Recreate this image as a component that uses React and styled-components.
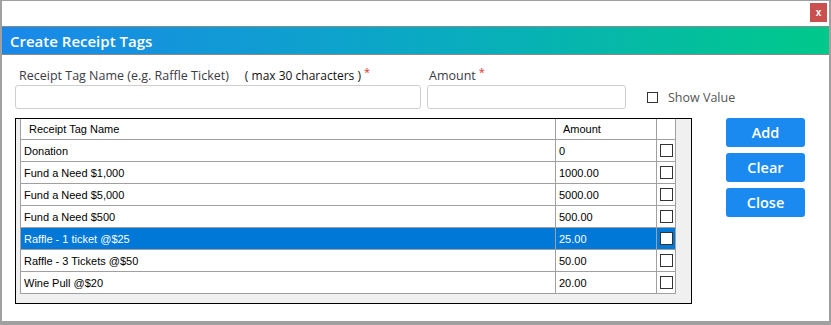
import React, { useState } from "react";
import styled, { createGlobalStyle } from "styled-components";

const GlobalStyle = createGlobalStyle`
  html, body {
    margin: 0;
    padding: 0;
    background: #ffffff;
  }
  * {
    box-sizing: border-box;
  }
`;

const Window = styled.div`
  width: 831px;
  height: 325px;
  border: 2px solid #a0a0a0;
  border-top-width: 1px;
  border-bottom-width: 4px;
  background: #ffffff;
  display: flex;
  flex-direction: column;
  font-family: "Open Sans", "Liberation Sans", sans-serif;
`;

const TopStrip = styled.div`
  height: 25px;
  display: flex;
  justify-content: flex-end;
  align-items: flex-start;
  padding: 2px 2px 0 0;
`;

const CloseBox = styled.button`
  width: 17px;
  height: 19px;
  border: none;
  padding: 0;
  background: #c9504f;
  color: #ffffff;
  font-family: "Liberation Sans", sans-serif;
  font-size: 10px;
  font-weight: bold;
  line-height: 19px;
  cursor: pointer;
`;

const TitleBar = styled.div`
  height: 29px;
  border-top: 1px solid #8a8a8a;
  border-bottom: 1px solid #8a8a8a;
  background: linear-gradient(to right, #1a88ea 0%, #0aa9c4 50%, #00c98a 100%);
  color: #ffffff;
  font-size: 15px;
  font-weight: 600;
  display: flex;
  align-items: center;
  padding-left: 8px;
`;

const Body = styled.div`
  flex: 1;
  padding: 12px 0 0 13px;
  display: flex;
  flex-direction: column;
`;

const FormRow = styled.div`
  display: flex;
  align-items: flex-start;
  gap: 6px;
`;

const Field = styled.div`
  width: ${(p) => p.$width}px;
  display: flex;
  flex-direction: column;
`;

const Label = styled.div`
  height: 18px;
  padding-left: ${(p) => p.$indent || 0}px;
  font-size: 12.5px;
  color: #3c3c46;
  white-space: nowrap;
`;

const Hint = styled.span`
  margin-left: 16px;
  font-size: 12px;
  color: #111111;
`;

const Required = styled.sup`
  color: #e0312c;
  font-size: 11px;
  margin-left: 3px;
  vertical-align: 4px;
  line-height: 0;
`;

const TextBox = styled.input`
  height: 24px;
  width: 100%;
  border: 1px solid #cfcfcf;
  border-radius: 3px;
  font-family: inherit;
  font-size: 13px;
  padding: 0 6px;
  outline: none;
`;

const ShowValue = styled.label`
  display: flex;
  align-items: center;
  gap: 10px;
  margin: 22px 0 0 15px;
  font-size: 12.5px;
  color: #555555;
`;

const PlainCheck = styled.span`
  width: 11px;
  height: 11px;
  border: 1px solid #333333;
  background: #ffffff;
  display: inline-block;
`;

const LowerRow = styled.div`
  display: flex;
  align-items: flex-start;
  margin-top: 9px;
`;

const GridFrame = styled.div`
  width: 677px;
  height: 186px;
  border: 1px solid #000000;
  background: #f0f0f0;
  padding: 0 0 0 4px;
  font-family: "Liberation Sans", Arial, sans-serif;
  font-size: 11px;
`;

const GridTable = styled.div`
  width: 656px;
  border-left: 1px solid #a0a0a0;
  background: #ffffff;
`;

const Row = styled.div`
  display: grid;
  grid-template-columns: 535px 101px 19px;
  height: ${(p) => (p.$header ? 21 : 22)}px;
  border-bottom: 1px solid #a0a0a0;
  background: ${(p) => (p.$selected ? "#0078d7" : "#ffffff")};
  color: ${(p) => (p.$selected ? "#ffffff" : "#000000")};
`;

const Cell = styled.div`
  border-right: 1px solid #a0a0a0;
  display: flex;
  align-items: center;
  padding-left: ${(p) => p.$pad || 3}px;
  white-space: nowrap;
  overflow: hidden;
`;

const CheckCell = styled(Cell)`
  justify-content: center;
  padding-left: 0;
`;

const CellCheck = styled.span`
  width: 13px;
  height: 13px;
  border: 1px solid #333333;
  background: #ffffff;
  display: inline-block;
`;

const ButtonColumn = styled.div`
  display: flex;
  flex-direction: column;
  gap: 6px;
  margin-left: 34px;
`;

const ActionButton = styled.button`
  width: 79px;
  height: 29px;
  border: none;
  border-radius: 3px;
  background: #1a8af0;
  color: #ffffff;
  font-family: "Open Sans", sans-serif;
  font-size: 14.5px;
  font-weight: 600;
  cursor: pointer;
  padding: 0;
`;

const tags = [
  { name: "Donation", amount: "0" },
  { name: "Fund a Need $1,000", amount: "1000.00" },
  { name: "Fund a Need $5,000", amount: "5000.00" },
  { name: "Fund a Need $500", amount: "500.00" },
  { name: "Raffle - 1 ticket @$25", amount: "25.00" },
  { name: "Raffle - 3 Tickets @$50", amount: "50.00" },
  { name: "Wine Pull @$20", amount: "20.00" },
];

const App = () => {
  const [selected, setSelected] = useState(4);

  return (
    <>
      <GlobalStyle />
      <Window>
        <TopStrip>
          <CloseBox>x</CloseBox>
        </TopStrip>
        <TitleBar>Create Receipt Tags</TitleBar>
        <Body>
          <FormRow>
            <Field $width={406}>
              <Label $indent={4}>
                Receipt Tag Name (e.g. Raffle Ticket)
                <Hint>( max 30 characters )</Hint>
                <Required>*</Required>
              </Label>
              <TextBox />
            </Field>
            <Field $width={199}>
              <Label $indent={2}>
                Amount
                <Required>*</Required>
              </Label>
              <TextBox />
            </Field>
            <ShowValue>
              <PlainCheck />
              Show Value
            </ShowValue>
          </FormRow>
          <LowerRow>
            <GridFrame>
              <GridTable>
                <Row $header>
                  <Cell $pad={8}>Receipt Tag Name</Cell>
                  <Cell $pad={7}>Amount</Cell>
                  <Cell />
                </Row>
                {tags.map((tag, index) => (
                  <Row
                    key={tag.name}
                    $selected={index === selected}
                    onClick={() => setSelected(index)}
                  >
                    <Cell>{tag.name}</Cell>
                    <Cell>{tag.amount}</Cell>
                    <CheckCell>
                      <CellCheck />
                    </CheckCell>
                  </Row>
                ))}
              </GridTable>
            </GridFrame>
            <ButtonColumn>
              <ActionButton>Add</ActionButton>
              <ActionButton>Clear</ActionButton>
              <ActionButton>Close</ActionButton>
            </ButtonColumn>
          </LowerRow>
        </Body>
      </Window>
    </>
  );
};

export default App;
